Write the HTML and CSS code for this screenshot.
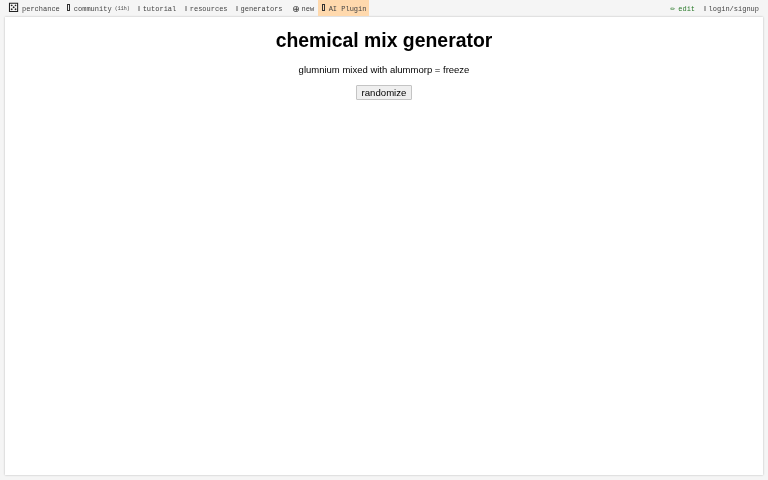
FILE: index.html
```html
<!DOCTYPE html>
<html lang="en">
<head>
<meta charset="utf-8">
<title>chemical mix generator</title>
<link rel="stylesheet" href="styles.css">
</head>
<body>
<nav class="bar">
  <div class="links">
    <a class="item first"><span class="die">⚄</span>perchance</a>
    <a class="item comm"><span class="tofu big"></span>community <small>(11h)</small></a>
    <a class="item tut"><span class="tofu"></span>tutorial</a>
    <a class="item res"><span class="tofu"></span>resources</a>
    <a class="item"><span class="tofu"></span>generators</a>
    <a class="item new"><span class="plus">⊕</span>new</a>
    <a class="item ai"><span class="tofu big dark"></span>AI Plugin</a>
  </div>
  <div class="links">
    <a class="item edit"><span class="pencil">✏</span>edit</a>
    <a class="item login"><span class="tofu"></span>login/signup</a>
  </div>
</nav>
<main class="frame">
  <h1>chemical mix generator</h1>
  <p class="out">glumnium mixed with alummorp = freeze</p>
  <button class="btn" type="button"><span class="btn-label">randomize</span></button>
</main>
</body>
</html>
```
FILE: styles.css
```css
html, body { height: 100%; }
body {
  margin: 0;
  background: #f5f5f5;
  display: flex;
  flex-direction: column;
  overflow: hidden;
  font-family: "Liberation Sans", Arial, sans-serif;
}
.bar {
  height: 16px;
  display: flex;
  justify-content: space-between;
  font: 7px/16px "Liberation Mono", monospace;
  color: #444;
  flex: none;
  will-change: opacity;
}
.links { display: flex; }
.item { display: flex; align-items: center; padding: 0 3.5px; white-space: nowrap; padding-top: 1px; box-sizing: border-box; }
.first { padding-left: 8px; }
.tut { padding-left: 3.5px; }
.res { padding-left: 4px; }
.new { padding-left: 6px; }
.item small { font-size: 5px; margin-left: 3px; }
.die { font: 13px/14px "DejaVu Sans", sans-serif; color: #222; margin-right: 3px; width: 11px; margin-top: -2px; }
.tofu { width: 2px; height: 5px; border: 1px solid #aaa; margin-right: 3px; box-sizing: border-box; margin-left: 1px; }
.tofu.big { width: 3px; height: 7px; border-color: #333; margin-top: -2px; margin-right: 4px; margin-left: 0; }
.plus { font: 9.5px/14px "DejaVu Sans", sans-serif; margin-right: 1.5px; }
.ai { background: #ffd9ad; padding: 1px 3px 0 4px; }
.edit { color: #2a7a2a; margin-right: -1px; }
.pencil { font: 6px/14px "DejaVu Sans", sans-serif; margin-right: 3px; }
.login { padding-right: 9px; padding-left: 5px; }
.frame {
  flex: 1;
  margin: 1px 5px 5px;
  background: #fff;
  box-shadow: 0 0 2px rgba(0,0,0,.25);
  text-align: center;
}
h1, .out, .btn-label { will-change: opacity; }
h1 { margin: 12px 0 0; font-size: 19.4px; line-height: 22px; color: #000; }
.out { margin: 13px 0 0; font-size: 9.5px; line-height: 11px; color: #000; }
.btn {
  margin-top: 10px;
  height: 15px;
  width: 56px;
  padding: 0;
  font: 9.6px/13px "Liberation Sans", Arial, sans-serif;
  background: #efefef;
  border: 1px solid #c4c4c4;
  border-radius: 1px;
  color: #000;
}
.btn-label { display: block; }
```
